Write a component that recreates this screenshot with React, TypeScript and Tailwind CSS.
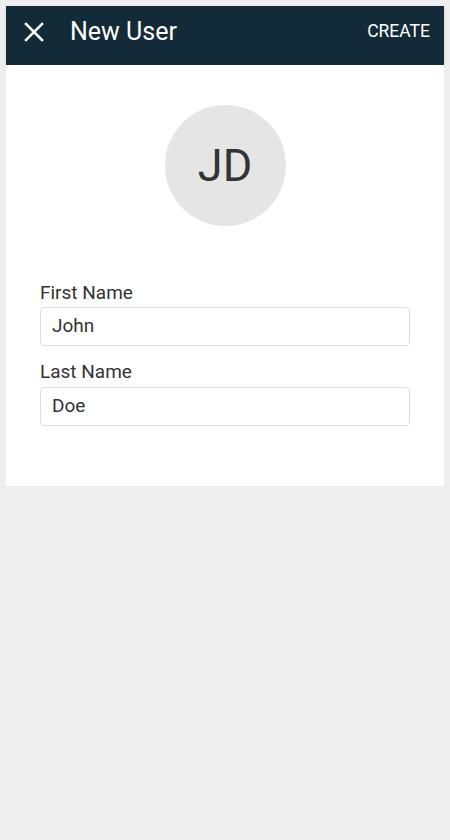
export default function App() {
  return (
    <div className="min-h-screen bg-[#eeeeee] p-[6px]" style={{ fontFamily: "Roboto, 'Liberation Sans', sans-serif" }}>
      {/* header */}
      <div className="flex h-[59px] items-center bg-[#132a38] pb-[8px] pl-[18px] pr-[14px] text-white shadow">
        <svg width="20" height="20" viewBox="0 0 20 20" fill="none" stroke="currentColor" strokeWidth="2.5" strokeLinecap="square">
          <path d="M2 2 18 18M18 2 2 18" />
        </svg>
        <h1 className="ml-[26px] text-[25px] leading-none">New User</h1>
        <button className="ml-auto text-[17.5px] leading-none">CREATE</button>
      </div>

      {/* body */}
      <div className="bg-white px-[34px] pt-[40px] pb-[60px]">
        <div className="mx-auto flex h-[121px] w-[121px] items-center justify-center rounded-full bg-[#e5e5e5]">
          <span className="text-[45px] leading-none text-[#333333]">JD</span>
        </div>

        <div className="mt-[56px]">
          <label className="block text-[19px] leading-[22px] text-[#333333]">First Name</label>
          <div className="mt-[3px] flex h-[39px] items-center rounded border border-[#dddddd] px-[11px] text-[19px] text-[#333333]">
            John
          </div>
        </div>

        <div className="mt-[15px]">
          <label className="block text-[19px] leading-[22px] text-[#333333]">Last Name</label>
          <div className="mt-[4px] flex h-[39px] items-center rounded border border-[#dddddd] px-[11px] text-[19px] text-[#333333]">
            Doe
          </div>
        </div>
      </div>
    </div>
  );
}
